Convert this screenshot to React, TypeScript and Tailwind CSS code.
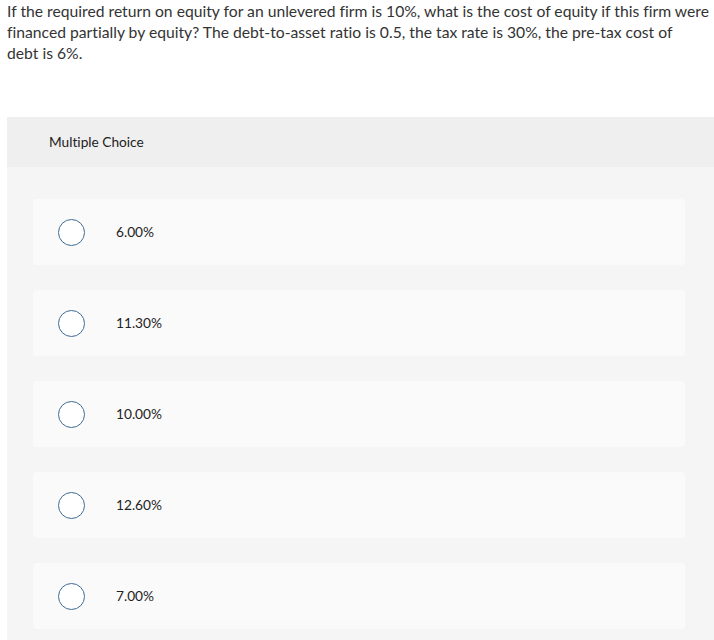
import React from "react";

const options = ["6.00%", "11.30%", "10.00%", "12.60%", "7.00%"];

export default function App() {
  return (
    <div className="w-[714px] h-[640px] overflow-hidden bg-white text-[#333333] [font-variant-ligatures:none]" style={{ fontFamily: "Lato, 'Liberation Sans', sans-serif" }}>
      <p className="pl-[7px] pt-[1px] text-[15.7px] leading-[21px] whitespace-nowrap">
        If the required return on equity for an unlevered firm is 10%, what is the cost of equity if this firm were
        <br />
        financed partially by equity? The debt-to-asset ratio is 0.5, the tax rate is 30%, the pre-tax cost of
        <br />
        debt is 6%.
      </p>
      <div className="ml-[7px] mt-[53px] bg-[#f5f5f5]">
        <div className="h-[50px] bg-[#efefef] pl-[42px] flex items-center text-[13.7px] text-[#222]">Multiple Choice</div>
        <div className="flex flex-col gap-[25px] pt-[32px] pl-[26px] pr-[29px] pb-[20px]">
          {options.map((o) => (
            <div key={o} className="h-[66px] rounded-[4px] bg-[#fafafa] flex items-center">
              <span className="ml-[25px] w-[27px] h-[27px] shrink-0 rounded-full border-[1.5px] border-[#3f6b94] bg-white box-border" />
              <span className="ml-[31px] text-[13.7px] text-[#222]">{o}</span>
            </div>
          ))}
        </div>
      </div>
    </div>
  );
}
